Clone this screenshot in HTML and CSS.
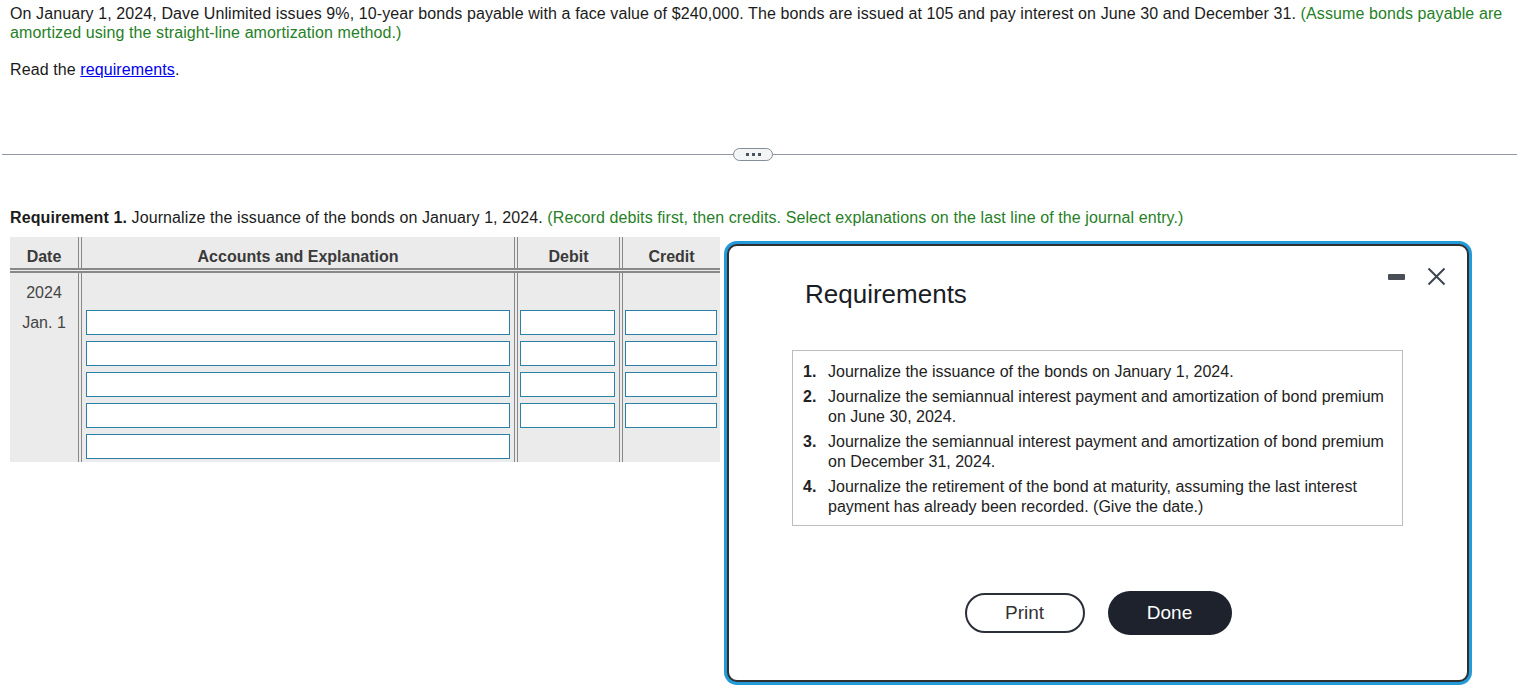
FILE: index.html
```html
<!DOCTYPE html>
<html lang="en">
<head>
    <meta charset="UTF-8">
    <meta name="viewport" content="width=device-width, initial-scale=1.0">
    <title>Bonds Payable</title>
    <link rel="stylesheet" href="styles.css">
</head>
<body>
<div class="question">
    <p>On January 1, 2024, Dave Unlimited issues 9%, 10-year bonds payable with a face value of $240,000. The bonds are issued at 105 and pay interest on June 30 and December 31. <span class="hint">(Assume bonds payable are amortized using the straight-line amortization method.)</span></p>
    <p>Read the <a href="#" class="link">requirements</a>.</p>
</div>

<div class="divider">
    <span class="pill"><i></i><i></i><i></i></span>
</div>

<div class="requirement">
    <p><b>Requirement 1.</b> Journalize the issuance of the bonds on January 1, 2024. <span class="hint">(Record debits first, then credits. Select explanations on the last line of the journal entry.)</span></p>

    <table class="journal">
        <thead>
        <tr>
            <th class="col-date">Date</th>
            <th class="col-acct">Accounts and Explanation</th>
            <th class="col-num">Debit</th>
            <th class="col-num last">Credit</th>
        </tr>
        </thead>
        <tbody>
        <tr class="year-row">
            <td class="col-date">2024</td>
            <td class="col-acct"></td>
            <td class="col-num"></td>
            <td class="col-num last"></td>
        </tr>
        <tr>
            <td class="col-date">Jan. 1</td>
            <td class="col-acct"><input type="text"></td>
            <td class="col-num"><input type="text"></td>
            <td class="col-num last"><input type="text"></td>
        </tr>
        <tr>
            <td class="col-date"></td>
            <td class="col-acct"><input type="text"></td>
            <td class="col-num"><input type="text"></td>
            <td class="col-num last"><input type="text"></td>
        </tr>
        <tr>
            <td class="col-date"></td>
            <td class="col-acct"><input type="text"></td>
            <td class="col-num"><input type="text"></td>
            <td class="col-num last"><input type="text"></td>
        </tr>
        <tr>
            <td class="col-date"></td>
            <td class="col-acct"><input type="text"></td>
            <td class="col-num"><input type="text"></td>
            <td class="col-num last"><input type="text"></td>
        </tr>
        <tr>
            <td class="col-date"></td>
            <td class="col-acct"><input type="text"></td>
            <td class="col-num"></td>
            <td class="col-num last"></td>
        </tr>
        </tbody>
    </table>
</div>

<div class="modal">
    <div class="modal-controls">
        <span class="minimize"></span>
        <svg class="close" width="19" height="19" viewBox="0 0 19 19">
            <path d="M1.5 1.5 L17.5 17.5 M17.5 1.5 L1.5 17.5" stroke="#3d4550" stroke-width="2" fill="none"/>
        </svg>
    </div>
    <h2 class="modal-title">Requirements</h2>
    <ol class="req-list">
        <li><span class="num">1.</span><span>Journalize the issuance of the bonds on January 1, 2024.</span></li>
        <li><span class="num">2.</span><span>Journalize the semiannual interest payment and amortization of bond premium on June 30, 2024.</span></li>
        <li><span class="num">3.</span><span>Journalize the semiannual interest payment and amortization of bond premium on December 31, 2024.</span></li>
        <li><span class="num">4.</span><span>Journalize the retirement of the bond at maturity, assuming the last interest payment has already been recorded. (Give the date.)</span></li>
    </ol>
    <div class="modal-buttons">
        <button class="btn-print">Print</button>
        <button class="btn-done">Done</button>
    </div>
</div>
</body>
</html>
```

FILE: styles.css
```css
body {
    margin: 0;
    font-family: "Liberation Sans", Arial, sans-serif;
    font-size: 16px;
    color: #1b1b1b;
    background-color: #fff;
}

p {
    margin: 0;
    line-height: 19px;
    letter-spacing: 0.1px;
}

.question {
    padding: 4px 10px 0 10px;
}

.question p {
    margin-bottom: 18px;
}

.hint {
    color: #267f26;
}

.link {
    color: #0000ee;
}

.divider {
    margin: 75px 0 0 2px;
    height: 1px;
    background-color: #8e97a2;
    position: relative;
}

.pill {
    position: absolute;
    left: 731px;
    top: -6px;
    width: 38px;
    height: 11px;
    border: 1px solid #848e9a;
    border-radius: 7px;
    background-color: #f3f4f6;
    display: flex;
    justify-content: center;
    align-items: center;
    gap: 3px;
}

.pill i {
    width: 3px;
    height: 3px;
    background-color: #4a5260;
}

.requirement {
    padding: 53px 10px 0 10px;
}

.requirement p {
    margin-bottom: 10px;
}

.journal {
    border-collapse: collapse;
    background-color: #ebebeb;
    font-size: 16px;
    color: #444;
}

.journal th {
    height: 29px;
    padding: 0 0 2px 0;
    vertical-align: bottom;
    font-weight: bold;
    color: #3a3a3a;
    border-bottom: 5px double #888;
}

.journal td {
    height: 31px;
    padding: 0;
    vertical-align: middle;
}

.journal .year-row td {
    height: 29px;
    padding-top: 5px;
}

.col-date {
    width: 68px;
    text-align: center;
    border-right: 4px double #888;
}

.col-acct {
    width: 432px;
    border-right: 4px double #888;
}

.col-num {
    width: 101px;
    border-right: 4px double #888;
}

.col-num.last {
    width: 97px;
    border-right: none;
}

.journal input {
    display: block;
    box-sizing: border-box;
    height: 25px;
    border: 1px solid #2a80a6;
    background-color: #fff;
    margin: 0;
}

.col-acct input {
    width: 424px;
    margin-left: 4px;
}

.col-num input {
    width: 95px;
    margin-left: 2px;
}

.col-num.last input {
    width: 92px;
}

.modal {
    position: absolute;
    left: 727px;
    top: 244px;
    width: 738px;
    height: 434px;
    border: 2px solid #2f2f2f;
    border-radius: 10px;
    box-shadow: 0 0 0 3px #229bd8;
    background-color: #fff;
}

.modal-controls {
    position: absolute;
    top: 21px;
    right: 21px;
    display: flex;
    align-items: center;
    gap: 22px;
}

.minimize {
    display: block;
    width: 17px;
    height: 6px;
    border-radius: 1px;
    background-color: #4a4f57;
}

.modal-title {
    margin: 33px 0 0 76px;
    font-size: 26px;
    font-weight: normal;
    line-height: 30px;
    color: #1a1d26;
}

.req-list {
    list-style: none;
    margin: 41px 0 0 63px;
    width: 589px;
    padding: 11px 10px 8px 10px;
    border: 1px solid #bdbdbd;
    font-size: 16px;
    line-height: 20px;
    color: #222;
}

.req-list li {
    display: flex;
    margin-bottom: 5px;
}

.req-list li:last-child {
    margin-bottom: 0;
}

.req-list .num {
    flex: 0 0 25px;
    font-weight: bold;
}

.modal-buttons {
    display: flex;
    justify-content: center;
    align-items: center;
    gap: 23px;
    margin-top: 65px;
}

.modal-buttons button {
    font-family: "Liberation Sans", Arial, sans-serif;
    font-size: 19px;
    border-radius: 22px;
    cursor: pointer;
}

.btn-print {
    width: 120px;
    height: 40px;
    border: 2px solid #2b2f38;
    background-color: #fff;
    color: #333;
}

.btn-done {
    width: 124px;
    height: 44px;
    border: none;
    background-color: #1d222c;
    color: #fff;
}
```
